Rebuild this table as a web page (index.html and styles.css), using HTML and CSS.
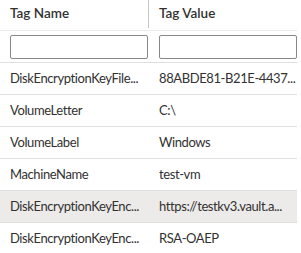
FILE: index.html
```html
<!DOCTYPE html>
<html lang="en">
<head>
<meta charset="UTF-8">
<title>Tags</title>
<link rel="stylesheet" href="styles.css">
</head>
<body>
<div class="tag-grid">
    <div class="head-row">
        <div class="head-cell first">Tag Name</div>
        <div class="head-cell">Tag Value</div>
    </div>
    <div class="filter-row">
        <div class="filter-cell"><input type="text" class="filter-input"></div>
        <div class="filter-cell"><input type="text" class="filter-input"></div>
    </div>
    <div class="row">
        <div class="cell" title="DiskEncryptionKeyFileName">DiskEncryptionKeyFile...</div>
        <div class="cell">88ABDE81-B21E-4437...</div>
    </div>
    <div class="row">
        <div class="cell">VolumeLetter</div>
        <div class="cell">C:\</div>
    </div>
    <div class="row">
        <div class="cell">VolumeLabel</div>
        <div class="cell">Windows</div>
    </div>
    <div class="row">
        <div class="cell">MachineName</div>
        <div class="cell">test-vm</div>
    </div>
    <div class="row selected">
        <div class="cell">DiskEncryptionKeyEnc...</div>
        <div class="cell">https://testkv3.vault.a...</div>
    </div>
    <div class="row">
        <div class="cell">DiskEncryptionKeyEnc...</div>
        <div class="cell">RSA-OAEP</div>
    </div>
</div>
</body>
</html>
```

FILE: styles.css
```css
body {
    margin: 0;
    background: #ffffff;
    font-family: Lato, "Liberation Sans", sans-serif;
    font-size: 13.5px;
    color: #323130;
}

.tag-grid {
    width: 297px;
}

.head-row {
    display: grid;
    grid-template-columns: 149px 148px;
    height: 30px;
    border-bottom: 1px solid #edebe9;
}

.head-cell {
    height: 28px;
    line-height: 26px;
    padding-left: 10px;
    font-weight: 600;
}

.head-cell.first {
    border-right: 1px solid #c8c6c4;
}

.filter-row {
    display: grid;
    grid-template-columns: 149px 148px;
    height: 31px;
    border-bottom: 1px solid #e1dfdd;
}

.filter-cell {
    padding: 4px 0 0 10px;
}

.filter-input {
    display: block;
    box-sizing: border-box;
    width: 138px;
    height: 24px;
    margin: 0;
    border: 1px solid #8a8886;
    border-radius: 2px;
    background: #ffffff;
}

.row {
    display: grid;
    grid-template-columns: 149px 148px;
    height: 31px;
    border-bottom: 1px solid #e1dfdd;
}

.row.selected {
    background: #edebe9;
}

.cell {
    padding-left: 10px;
    font-size: 13px;
    letter-spacing: -0.4px;
    line-height: 31px;
    white-space: nowrap;
    overflow: hidden;
    text-overflow: ellipsis;
}
```
